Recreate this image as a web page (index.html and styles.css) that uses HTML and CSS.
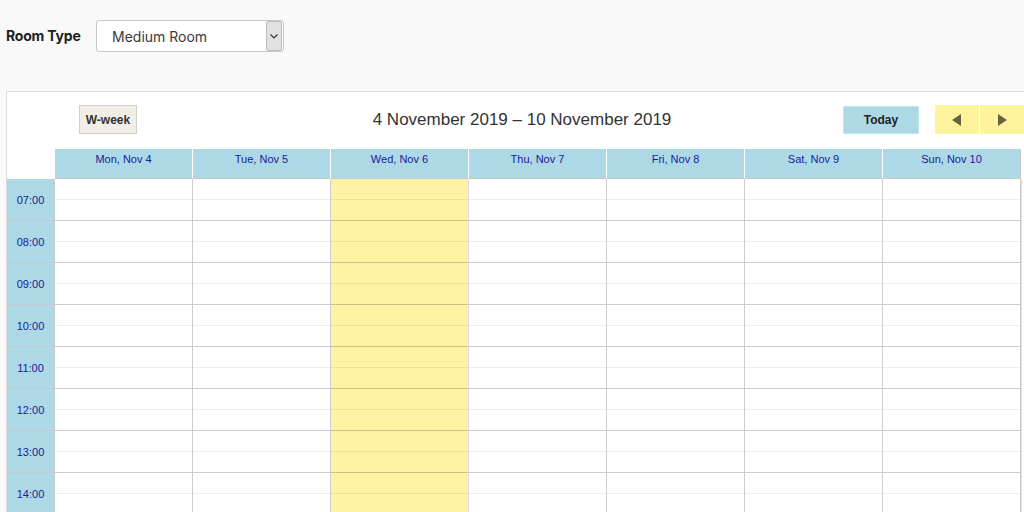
FILE: index.html
```html
<!DOCTYPE html>
<html>
<head>
<meta charset="utf-8">
<link rel="stylesheet" href="styles.css">
</head>
<body>
<div class="top">
  <span class="label">Room Type</span>
  <div class="select">
    <span class="select-text">Medium Room</span>
    <span class="select-arrow"><svg width="8" height="5" viewBox="0 0 8 5"><path d="M0.5 0.5 L4 4 L7.5 0.5" fill="none" stroke="#333" stroke-width="1.2"/></svg></span>
  </div>
</div>

<div class="cal">
  <div class="toolbar">
    <div class="tb-left"><button class="btn-week">W-week</button></div>
    <div class="title">4 November 2019 – 10 November 2019</div>
    <div class="tb-right">
      <button class="btn-today">Today</button>
      <div class="nav">
        <button class="btn-nav"><svg width="10" height="12" viewBox="0 0 10 12"><path d="M9 0 L0 6 L9 12 Z" fill="#67623f"/></svg></button>
        <button class="btn-nav"><svg width="10" height="12" viewBox="0 0 10 12"><path d="M1 0 L10 6 L1 12 Z" fill="#67623f"/></svg></button>
      </div>
    </div>
  </div>

  <div class="grid">
    <div class="corner"></div>
    <div class="dh">Mon, Nov 4</div>
    <div class="dh">Tue, Nov 5</div>
    <div class="dh">Wed, Nov 6</div>
    <div class="dh">Thu, Nov 7</div>
    <div class="dh">Fri, Nov 8</div>
    <div class="dh">Sat, Nov 9</div>
    <div class="dh">Sun, Nov 10</div>
    <div class="dh-fill"></div>

    <div class="times">
      <div class="time">07:00</div>
      <div class="time">08:00</div>
      <div class="time">09:00</div>
      <div class="time">10:00</div>
      <div class="time">11:00</div>
      <div class="time">12:00</div>
      <div class="time">13:00</div>
      <div class="time">14:00</div>
    </div>
    <div class="day"></div>
    <div class="day"></div>
    <div class="day today"></div>
    <div class="day"></div>
    <div class="day"></div>
    <div class="day"></div>
    <div class="day"></div>
    <div class="day-fill"></div>
  </div>
</div>
</body>
</html>
```

FILE: styles.css
```css
html, body {
  margin: 0;
  padding: 0;
  overflow: hidden;
}
body {
  background: #f9f9f9;
  font-family: "Liberation Sans", Arial, sans-serif;
  width: 1024px;
  height: 512px;
}
.top {
  display: flex;
  align-items: center;
  padding: 20px 0 0 6px;
  height: 32px;
}
.label {
  font-family: Inter, "Open Sans", sans-serif;
  font-weight: 700;
  font-size: 14px;
  color: #1e1e1e;
  width: 90px;
  letter-spacing: -0.2px;
  margin-top: -2px;
}
.select {
  width: 186px;
  height: 30px;
  background: #fff;
  border: 1px solid #c8c8c8;
  border-radius: 3px;
  display: flex;
  align-items: center;
  justify-content: space-between;
  box-sizing: content-box;
}
.select-text {
  font-family: Inter, "Open Sans", sans-serif;
  font-size: 14px;
  color: #3a3a3a;
  padding-left: 15px;
}
.select-arrow {
  width: 14px;
  height: 28px;
  margin-right: 1px;
  background: #e1e1e1;
  border: 1px solid #bdbdbd;
  border-radius: 2px;
  display: flex;
  align-items: center;
  justify-content: center;
}
.cal {
  margin: 39px 0 0 6px;
  width: 1030px;
  background: #fff;
  border-top: 1px solid #dcdcdc;
  border-left: 1px solid #dcdcdc;
}
.toolbar {
  display: grid;
  grid-template-columns: 1fr auto 1fr;
  align-items: center;
  padding: 13px 0 15px 0;
}
.tb-left {
  padding-left: 72px;
}
.btn-week {
  font-family: "Liberation Sans", Arial, sans-serif;
  font-weight: 700;
  font-size: 12px;
  color: #333;
  background: #f1eee8;
  border: 1px solid #cfcfcf;
  width: 58px;
  height: 29px;
  padding: 0;
}
.title {
  font-size: 17px;
  color: #333;
  padding-top: 1px;
}
.tb-right {
  display: flex;
  justify-content: flex-end;
  align-items: center;
  gap: 16px;
  padding-right: 13px;
}
.btn-today {
  font-family: "Liberation Sans", Arial, sans-serif;
  font-weight: 700;
  font-size: 12px;
  color: #222;
  background: #add8e6;
  border: 1px solid #c5e3ec;
  width: 76px;
  height: 28px;
  padding: 0;
  margin-left: 1px;
}
.nav {
  display: flex;
  gap: 1px;
}
.btn-nav {
  width: 44px;
  height: 29px;
  background: #fff39e;
  border: none;
  padding: 0;
  display: flex;
  align-items: center;
  justify-content: center;
}
.grid {
  display: grid;
  grid-template-columns: 48px repeat(7, 138px) 1fr;
}
.corner {
  background: #fff;
}
.dh {
  background: #add8e6;
  border-right: 1px solid #fff;
  border-bottom: 1px solid #c8c8c8;
  font-size: 11px;
  color: #1a1a9a;
  text-align: center;
  padding-top: 4px;
  box-sizing: content-box;
  height: 25px;
}
.dh:nth-child(8) {
  border-right: 1px solid #c8c8c8;
}
.dh-fill {
  background: #fff;
}
.times {
  display: flex;
  flex-direction: column;
  border-right: 1px solid #c8c8c8;
}
.time {
  height: 41px;
  border-bottom: 1px solid #c8c8c8;
  background: #add8e6;
  display: flex;
  align-items: center;
  justify-content: center;
  font-size: 11px;
  color: #1a1a9a;
}
.day {
  border-right: 1px solid #cccccc;
  background-color: #fff;
  background-image: repeating-linear-gradient(
    to bottom,
    transparent 0px,
    transparent 20px,
    rgba(0, 0, 0, 0.07) 20px,
    rgba(0, 0, 0, 0.07) 21px,
    transparent 21px,
    transparent 41px,
    rgba(0, 0, 0, 0.2) 41px,
    rgba(0, 0, 0, 0.2) 42px
  );
}
.day.today {
  background-color: #fff2a2;
  border-right: 1px solid #dadbe8;
}
.day-fill {
  background: #fff;
  border-left: 1px solid #ddd;
}
```
